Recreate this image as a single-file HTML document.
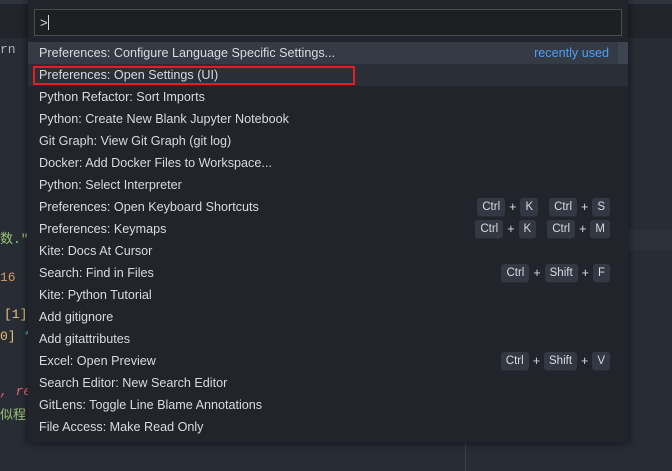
<!DOCTYPE html>
<html><head><meta charset="utf-8"><style>
*{margin:0;padding:0;box-sizing:border-box}
body{width:672px;height:471px;background:#282c34;position:relative;overflow:hidden;font-family:"Liberation Sans","Noto Sans CJK SC",sans-serif;}
.abs{position:absolute}
.pal{position:absolute;left:28px;top:0;width:600px;height:443px;background:#21252b;box-shadow:0 0 8px rgba(0,0,0,.6);}
.inp{position:absolute;left:6px;top:9px;width:588px;height:27px;background:#1d1f23;border:1px solid #4b4b4b;color:#d7dae0;font-size:13px;line-height:25px;padding-left:5px}
.row{position:absolute;left:0;width:600px;height:22px;line-height:23px;font-size:12.6px;color:#d7dae0;padding-left:11px}
.kb{position:absolute;right:18px;top:2px;height:18px;display:flex;align-items:center;font-size:11.5px;color:#d7dae0}
.k{background:#343842;border-radius:3px;padding:0 5px;height:18px;line-height:18px;box-shadow:0 1px 0 #2a2d33}
.p{margin:0 4px;font-size:12.5px}
.g{width:11px}
.code{position:absolute;font-size:13px;font-family:"Liberation Mono","Noto Sans CJK SC",monospace}
</style></head><body>
<div class="abs" style="left:0;top:0;width:672px;height:4px;background:#2f343d"></div>
<div class="abs" style="left:628px;top:4px;width:44px;height:34px;background:#21252b"></div>
<div class="abs" style="left:628px;top:230px;width:44px;height:20px;background:#2c313a"></div>
<div class="abs" style="left:0;top:4px;width:28px;height:34px;background:#21252b"></div>
<div class="abs" style="left:465px;top:443px;width:1px;height:28px;background:#3a3f4b"></div>
<div class="code" style="left:0;top:42px;color:#abb2bf">rn</div>
<div class="code" style="left:0;top:228px;color:#98c379">数."</div>
<div class="code" style="left:0;top:270px;color:#d19a66">16</div>
<div class="code" style="left:4px;top:307px;color:#e5c07b">[1]</div>
<div class="code" style="left:0;top:329px;color:#e5c07b">0] <span style="color:#56b6c2">*</span></div>
<div class="code" style="left:0;top:384px;color:#e06c75;font-style:italic">, re</div>
<div class="code" style="left:0;top:404px;color:#98c379">似程</div>
<div class="pal">
<div class="inp">&gt;<span style="display:inline-block;width:1px;height:15px;background:#d7dae0;vertical-align:-3px"></span></div>
<div class="row" style="top:42px;background:#353b45">Preferences: Configure Language Specific Settings...<span style="position:absolute;right:19px;color:#4d9cf8">recently used</span></div>
<div class="abs" style="left:590px;top:42px;width:10px;height:22px;background:#3e4451"></div>
<div class="row" style="top:64px;background:#2a2e36">Preferences: Open Settings (UI)</div>
<div class="abs" style="left:5px;top:66px;width:322px;height:19px;border:2px solid #e51c23"></div>
<div class="row" style="top:86px">Python Refactor: Sort Imports</div>
<div class="row" style="top:108px">Python: Create New Blank Jupyter Notebook</div>
<div class="row" style="top:130px">Git Graph: View Git Graph (git log)</div>
<div class="row" style="top:152px">Docker: Add Docker Files to Workspace...</div>
<div class="row" style="top:174px">Python: Select Interpreter</div>
<div class="row" style="top:196px">Preferences: Open Keyboard Shortcuts<div class="kb"><span class="k">Ctrl</span><span class="p">+</span><span class="k">K</span><span class="g"></span><span class="k">Ctrl</span><span class="p">+</span><span class="k">S</span></div></div>
<div class="row" style="top:218px">Preferences: Keymaps<div class="kb"><span class="k">Ctrl</span><span class="p">+</span><span class="k">K</span><span class="g"></span><span class="k">Ctrl</span><span class="p">+</span><span class="k">M</span></div></div>
<div class="row" style="top:240px">Kite: Docs At Cursor</div>
<div class="row" style="top:262px">Search: Find in Files<div class="kb"><span class="k">Ctrl</span><span class="p">+</span><span class="k">Shift</span><span class="p">+</span><span class="k">F</span></div></div>
<div class="row" style="top:284px">Kite: Python Tutorial</div>
<div class="row" style="top:306px">Add gitignore</div>
<div class="row" style="top:328px">Add gitattributes</div>
<div class="row" style="top:350px">Excel: Open Preview<div class="kb"><span class="k">Ctrl</span><span class="p">+</span><span class="k">Shift</span><span class="p">+</span><span class="k">V</span></div></div>
<div class="row" style="top:372px">Search Editor: New Search Editor</div>
<div class="row" style="top:394px">GitLens: Toggle Line Blame Annotations</div>
<div class="row" style="top:416px">File Access: Make Read Only</div>
</div>
</body></html>
